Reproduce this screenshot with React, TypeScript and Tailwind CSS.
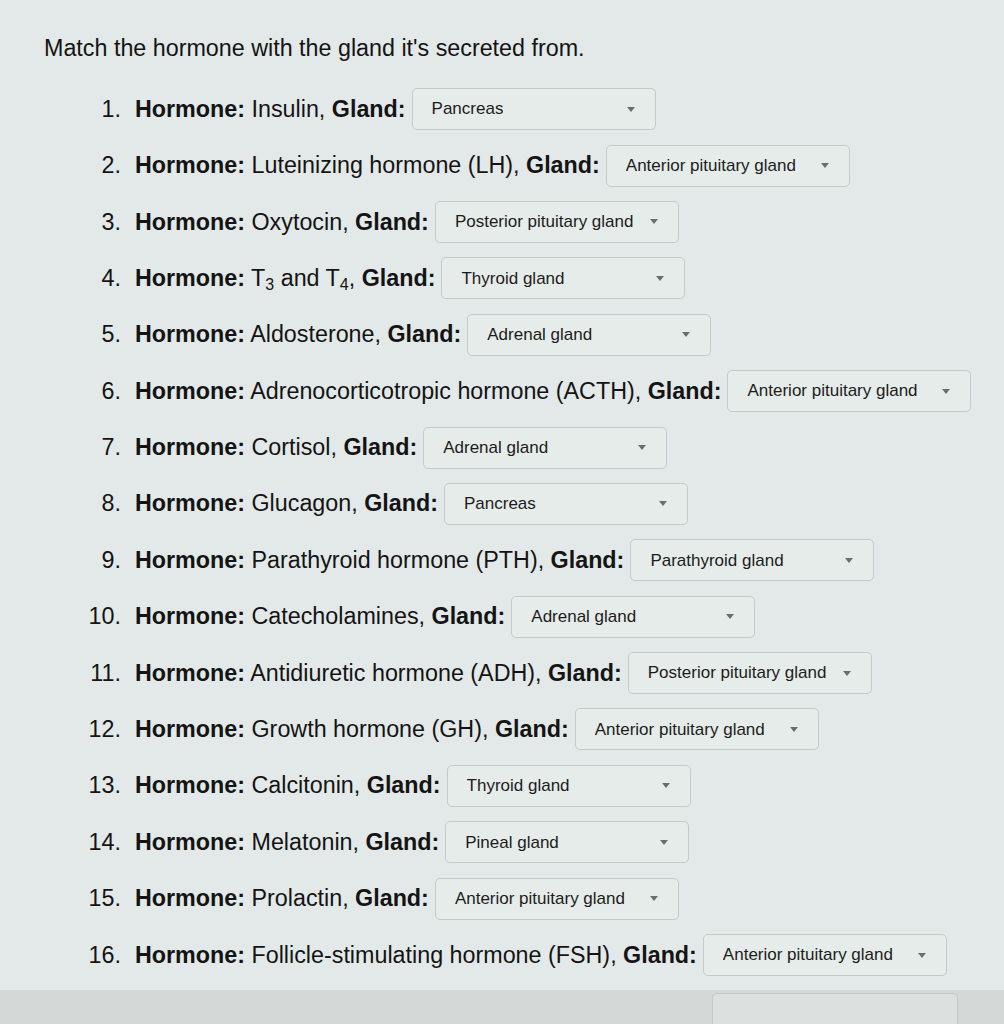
import React from "react";

type Item = { hormone: React.ReactNode; gland: string };

const items: Item[] = [
  { hormone: "Insulin", gland: "Pancreas" },
  { hormone: "Luteinizing hormone (LH)", gland: "Anterior pituitary gland" },
  { hormone: "Oxytocin", gland: "Posterior pituitary gland" },
  {
    hormone: (
      <>
        T<sub className="text-[16px]">3</sub> and T<sub className="text-[16px]">4</sub>
      </>
    ),
    gland: "Thyroid gland",
  },
  { hormone: "Aldosterone", gland: "Adrenal gland" },
  { hormone: "Adrenocorticotropic hormone (ACTH)", gland: "Anterior pituitary gland" },
  { hormone: "Cortisol", gland: "Adrenal gland" },
  { hormone: "Glucagon", gland: "Pancreas" },
  { hormone: "Parathyroid hormone (PTH)", gland: "Parathyroid gland" },
  { hormone: "Catecholamines", gland: "Adrenal gland" },
  { hormone: "Antidiuretic hormone (ADH)", gland: "Posterior pituitary gland" },
  { hormone: "Growth hormone (GH)", gland: "Anterior pituitary gland" },
  { hormone: "Calcitonin", gland: "Thyroid gland" },
  { hormone: "Melatonin", gland: "Pineal gland" },
  { hormone: "Prolactin", gland: "Anterior pituitary gland" },
  { hormone: "Follicle-stimulating hormone (FSH)", gland: "Anterior pituitary gland" },
];

function Caret() {
  return (
    <svg width="8" height="5" viewBox="0 0 8 5" className="shrink-0">
      <path d="M0 0 L8 0 L4 5 Z" fill="#6b6e6e" />
    </svg>
  );
}

function GlandSelect({ value }: { value: string }) {
  return (
    <div className="ml-[6px] flex h-[42px] w-[244px] shrink-0 items-center rounded-[5px] border border-[#c4cac9] bg-[#e6ecea] pl-[19px] pr-[20px] text-[17px] text-[#1c1c1c]">
      <span className="truncate">{value}</span>
      <span className="ml-auto">
        <Caret />
      </span>
    </div>
  );
}

export default function App() {
  return (
    <div className="flex h-[1024px] flex-col overflow-hidden bg-[#e3e9e8] font-['Liberation_Sans',Arial,sans-serif] text-[#141414]">
      <h1 className="pl-[44px] pt-[33px] text-[23.3px] leading-[30px]">
        Match the hormone with the gland it's secreted from.
      </h1>
      <ol className="mt-[18px]">
        {items.map((item, i) => (
          <li key={i} className="flex h-[56.4px] items-center text-[23.3px]">
            <span className="w-[121px] shrink-0 text-right">{i + 1}.</span>
            <span className="ml-[14px] whitespace-nowrap">
              <b>Hormone:</b> {item.hormone}, <b>Gland:</b>
            </span>
            <GlandSelect value={item.gland} />
          </li>
        ))}
      </ol>
      <div className="mt-auto h-[34px] bg-[#d4d9d8] pl-[712px] pt-[3px]">
        <div className="h-[40px] w-[246px] rounded-[5px] border border-[#c4cac9] bg-[#dce1e0]" />
      </div>
    </div>
  );
}
